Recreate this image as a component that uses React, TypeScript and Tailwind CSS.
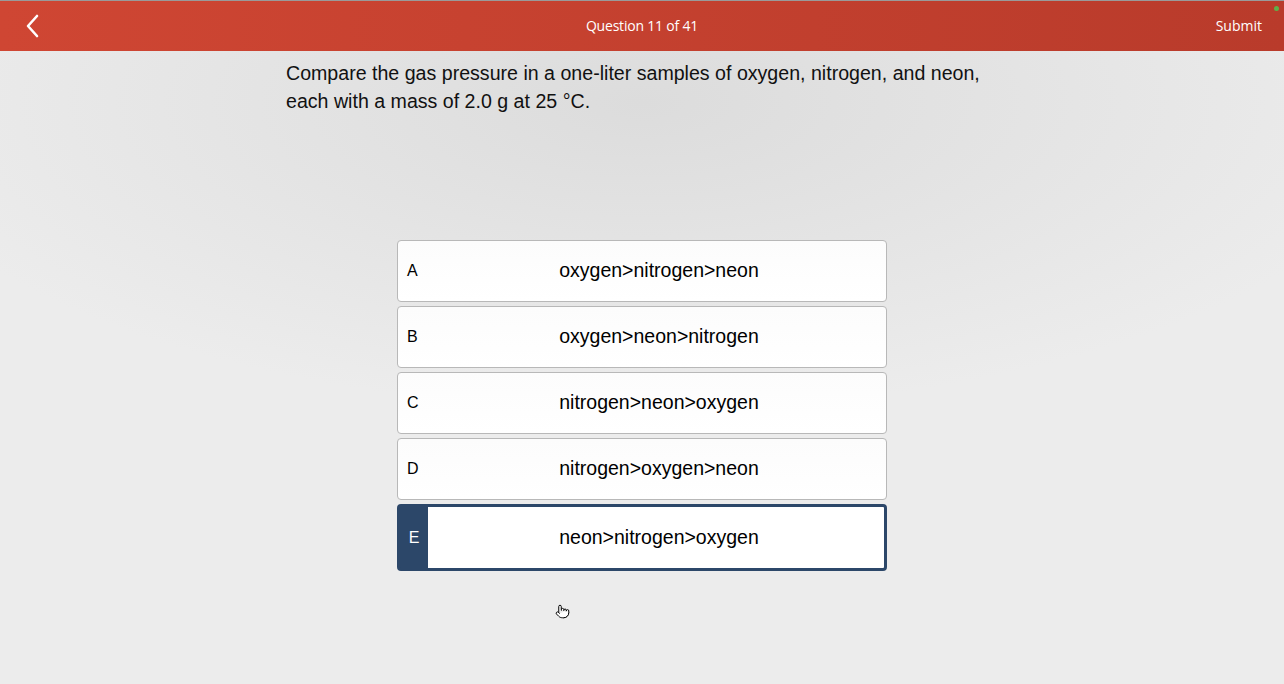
import { Pointer } from 'lucide-react';

const options = [
  { letter: 'A', text: 'oxygen>nitrogen>neon' },
  { letter: 'B', text: 'oxygen>neon>nitrogen' },
  { letter: 'C', text: 'nitrogen>neon>oxygen' },
  { letter: 'D', text: 'nitrogen>oxygen>neon' },
  { letter: 'E', text: 'neon>nitrogen>oxygen', selected: true },
];

const App = () => {
  return (
    <div
      className="relative w-[1284px] h-[684px] overflow-hidden bg-[#ececec] font-['Liberation_Sans',Arial,sans-serif]"
      style={{ backgroundImage: 'radial-gradient(ellipse 60% 45% at 50% 15%, #dcdcdc 0%, #e4e4e4 50%, #ececec 100%)' }}
    >
      {/* Header */}
      <header className="relative h-[51px] flex items-center justify-between border-t border-[#9a9a9a] bg-gradient-to-r from-[#cf4633] to-[#b93b2b]">
        <button className="w-[70px] h-full flex items-center pl-[24px]">
          <svg width="18" height="26" viewBox="0 0 18 26" fill="none">
            <path d="M13 3 L4 13 L13 23" stroke="white" strokeWidth="2.6" strokeLinecap="round" strokeLinejoin="round" />
          </svg>
        </button>
        <div className="absolute left-1/2 -translate-x-1/2 top-[14px] text-[14px] text-white font-['Open_Sans',sans-serif] tracking-[-0.2px]">
          Question 11 of 41
        </div>
        <button className="pr-[22px] text-[14px] text-white font-['Open_Sans',sans-serif] mt-[-2px]">Submit</button>
        <span className="absolute right-[5px] top-[5px] w-[5px] h-[5px] rounded-full bg-[#5fb04a]" />
      </header>

      {/* Question */}
      <div className="pl-[286px] pt-[8px] w-[1100px]">
        <p className="text-[19.6px] leading-[28px] text-[#111]">
          Compare the gas pressure in a one-liter samples of oxygen, nitrogen, and neon,
          <br />
          each with a mass of 2.0 g at 25 °C.
        </p>
      </div>

      {/* Options */}
      <div className="ml-[397px] mt-[125px] w-[490px] flex flex-col gap-[4px]">
        {options.map((o) =>
          o.selected ? (
            <div
              key={o.letter}
              className="h-[67px] flex rounded-[4px] border-[3px] border-[#2c4769] bg-[#2c4769] overflow-hidden"
            >
              <div className="w-[28px] flex items-center justify-center text-white text-[16px]">{o.letter}</div>
              <div className="flex-1 bg-white flex items-center justify-center pl-[6px] text-[19.5px] text-black">
                {o.text}
              </div>
            </div>
          ) : (
            <div
              key={o.letter}
              className="relative h-[62px] flex items-center rounded-[4px] border border-[#b8b8b8] bg-gradient-to-b from-[#fcfcfc] to-white"
            >
              <div className="absolute left-[9px] text-[16px] text-black">{o.letter}</div>
              <div className="flex-1 text-center pl-[34px] text-[19.5px] text-black">{o.text}</div>
            </div>
          )
        )}
      </div>

      {/* Cursor */}
      <div className="absolute left-[555px] top-[604px]">
        <Pointer size={15} strokeWidth={1.6} className="text-black fill-white" />
      </div>
    </div>
  );
};

export default App;
